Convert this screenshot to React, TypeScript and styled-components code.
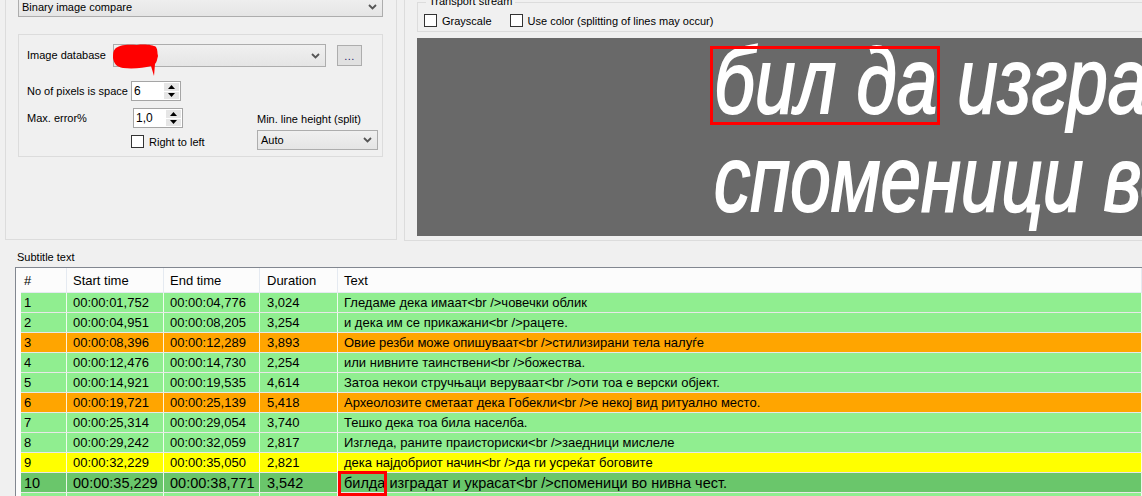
import React from "react";
import styled, { createGlobalStyle } from "styled-components";

const GlobalStyle = createGlobalStyle`
  html, body {
    margin: 0;
    padding: 0;
    background: #f0f0f0;
    overflow: hidden;
  }
  body {
    font-family: "Liberation Sans", Arial, sans-serif;
    font-size: 11px;
    color: #000;
  }
`;

const Page = styled.div`
  width: 1142px;
  height: 496px;
  overflow: hidden;
  display: flex;
  flex-direction: column;
`;

const TopArea = styled.div`
  display: flex;
  align-items: flex-start;
  margin-top: -10px;
  height: 251px;
  flex-shrink: 0;
`;

const LeftPanel = styled.div`
  box-sizing: border-box;
  margin-left: 5px;
  width: 392px;
  height: 250px;
  border: 1px solid #dcdcdc;
  padding: 0 12px;
  flex-shrink: 0;
`;

const RightPanel = styled.div`
  box-sizing: border-box;
  margin-left: 7px;
  margin-right: -20px;
  flex: 1;
  height: 251px;
  border: 1px solid #dcdcdc;
  padding-left: 12px;
  display: flex;
  flex-direction: column;
`;

const Combo = styled.div<{ $width: number; $height?: number; $top?: number }>`
  box-sizing: border-box;
  position: relative;
  width: ${(p) => p.$width}px;
  height: ${(p) => p.$height ?? 21}px;
  margin-top: ${(p) => p.$top ?? 0}px;
  border: 1px solid #adadad;
  background: linear-gradient(#f0f0f0, #e5e5e5);
  display: flex;
  align-items: center;
  padding-left: 3px;
  flex-shrink: 0;
`;

const ComboArrow = styled.svg`
  position: absolute;
  right: 5px;
  top: 50%;
  margin-top: -3px;
`;

const Chevron = () => (
  <ComboArrow width="9" height="6" viewBox="0 0 9 6">
    <path d="M1 1 L4.5 4.5 L8 1" fill="none" stroke="#555" strokeWidth="1.8" />
  </ComboArrow>
);

const GroupBox = styled.div`
  box-sizing: border-box;
  margin-top: 17px;
  width: 365px;
  height: 123px;
  border: 1px solid #dcdcdc;
  padding: 9px 0 0 8px;
`;

const Row = styled.div<{ $top?: number }>`
  display: flex;
  align-items: center;
  margin-top: ${(p) => p.$top ?? 0}px;
`;

const Label = styled.span<{ $width?: number }>`
  display: inline-block;
  width: ${(p) => (p.$width ? `${p.$width}px` : "auto")};
  white-space: nowrap;
  line-height: 13px;
`;

const SmallButton = styled.div`
  box-sizing: border-box;
  width: 25px;
  height: 21px;
  margin-left: 11px;
  border: 1px solid #adadad;
  background: #e1e1e1;
  display: flex;
  align-items: center;
  justify-content: center;
  color: #1c1c6a;
  font-size: 11px;
  letter-spacing: 0.5px;
`;

const Scribble = styled.svg`
  position: absolute;
  left: -1px;
  top: -1px;
`;

const SpinBox = styled.div`
  box-sizing: border-box;
  width: 50px;
  height: 20px;
  border: 1px solid #a5a5a5;
  background: #fff;
  display: flex;
  align-items: stretch;
`;

const SpinValue = styled.span`
  flex: 1;
  padding-left: 2px;
  line-height: 18px;
  font-size: 12px;
`;

const SpinButtons = styled.div`
  width: 15px;
  display: flex;
  flex-direction: column;
  padding: 1px 1px 1px 0;
  gap: 1px;
`;

const SpinButton = styled.div`
  flex: 1;
  background: #e6e6e6;
  display: flex;
  align-items: center;
  justify-content: center;
`;

const Spin = ({ value }: { value: string }) => (
  <SpinBox>
    <SpinValue>{value}</SpinValue>
    <SpinButtons>
      <SpinButton>
        <svg width="7" height="4" viewBox="0 0 7 4">
          <path d="M0 4 L3.5 0 L7 4 Z" fill="#000" />
        </svg>
      </SpinButton>
      <SpinButton>
        <svg width="7" height="4" viewBox="0 0 7 4">
          <path d="M0 0 L3.5 4 L7 0 Z" fill="#000" />
        </svg>
      </SpinButton>
    </SpinButtons>
  </SpinBox>
);

const Lower = styled.div`
  display: flex;
  margin-top: 14px;
`;

const LeftCol = styled.div`
  width: 230px;
  display: flex;
  flex-direction: column;
`;

const RightCol = styled.div`
  padding-top: 32px;
  display: flex;
  flex-direction: column;
  gap: 4px;
`;

const CheckItem = styled.label<{ $left?: number }>`
  display: flex;
  align-items: center;
  gap: 5px;
  margin-left: ${(p) => p.$left ?? 0}px;
  white-space: nowrap;
`;

const CheckBox = styled.span`
  box-sizing: border-box;
  width: 13px;
  height: 13px;
  border: 1px solid #333;
  background: #fff;
  flex-shrink: 0;
`;

const TransportGroup = styled.div`
  position: relative;
  box-sizing: border-box;
  margin-top: 11px;
  height: 30px;
  border: 1px solid #dcdcdc;
  margin-right: -2px;
  padding: 7px 0 0 6px;
  display: flex;
  gap: 18px;
`;

const Legend = styled.span`
  position: absolute;
  top: -8px;
  left: 8px;
  padding: 0 3px;
  background: #f0f0f0;
  line-height: 13px;
`;

const Preview = styled.div`
  position: relative;
  margin-top: 6px;
  height: 198px;
  background: #696969;
  overflow: hidden;
  padding-left: 297px;
`;

const PreviewLine = styled.div`
  color: #fff;
  font-family: "Liberation Sans", Arial, sans-serif;
  font-style: italic;
  font-size: 92px;
  line-height: 98px;
  white-space: nowrap;
  -webkit-text-stroke: 2px #fff;
  transform: scaleX(0.79);
  transform-origin: left center;
  &:first-child {
    margin-top: -6px;
  }
`;

const Highlight = styled.div<{ $l: number; $t: number; $w: number; $h: number }>`
  position: absolute;
  box-sizing: border-box;
  left: ${(p) => p.$l}px;
  top: ${(p) => p.$t}px;
  width: ${(p) => p.$w}px;
  height: ${(p) => p.$h}px;
  border: 3px solid #ff0000;
  pointer-events: none;
`;

const SectionLabel = styled.div`
  margin-top: 10px;
  padding-left: 17px;
  line-height: 13px;
`;

const Table = styled.div`
  margin: 3px 0 0 15px;
  flex: 1;
  border-top: 1px solid #828790;
  border-left: 1px solid #828790;
  background: #fcfcfc;
  overflow: hidden;
`;

const HeaderRow = styled.div`
  display: flex;
  height: 24px;
  margin-left: 5px;
  border-bottom: 1px solid #e5eaf1;
`;

const widths = [46, 97, 96, 78];
const pads = [3, 6, 6, 7, 6];

const HeaderCell = styled.div<{ $col: number }>`
  box-sizing: border-box;
  ${(p) => (p.$col < 4 ? `width: ${widths[p.$col]}px;` : "flex: 1;")}
  padding-left: ${(p) => pads[p.$col]}px;
  border-right: 1px solid #e5eaf1;
  display: flex;
  align-items: center;
  font-size: 13px;
  color: #000;
`;

const rowColors = {
  green: "#90ee90",
  orange: "#ffa500",
  yellow: "#ffff00",
  selected: "#6ac66b",
};

type Tone = keyof typeof rowColors;

const DataRow = styled.div<{ $tone: Tone }>`
  display: flex;
  height: 20px;
  margin-left: 5px;
  box-sizing: border-box;
  border-bottom: 1px solid #e8e8e8;
  background: ${(p) => rowColors[p.$tone]};
  font-size: ${(p) => (p.$tone === "selected" ? 14.5 : 13)}px;
`;

const Cell = styled.div<{ $col: number }>`
  box-sizing: border-box;
  position: relative;
  ${(p) => (p.$col < 4 ? `width: ${widths[p.$col]}px;` : "flex: 1;")}
  padding-left: ${(p) => pads[p.$col]}px;
  border-right: 1px solid rgba(255, 255, 255, 0.85);
  display: flex;
  align-items: center;
  white-space: nowrap;
`;

type Sub = { n: string; start: string; end: string; dur: string; text: string; tone: Tone };

const subs: Sub[] = [
  { n: "1", start: "00:00:01,752", end: "00:00:04,776", dur: "3,024", text: "Гледаме дека имаат<br />човечки облик", tone: "green" },
  { n: "2", start: "00:00:04,951", end: "00:00:08,205", dur: "3,254", text: "и дека им се прикажани<br />рацете.", tone: "green" },
  { n: "3", start: "00:00:08,396", end: "00:00:12,289", dur: "3,893", text: "Овие резби може опишуваат<br />стилизирани тела налуѓе", tone: "orange" },
  { n: "4", start: "00:00:12,476", end: "00:00:14,730", dur: "2,254", text: "или нивните таинствени<br />божества.", tone: "green" },
  { n: "5", start: "00:00:14,921", end: "00:00:19,535", dur: "4,614", text: "Затоа некои стручњаци веруваат<br />оти тоа е верски објект.", tone: "green" },
  { n: "6", start: "00:00:19,721", end: "00:00:25,139", dur: "5,418", text: "Археолозите сметаат дека Гобекли<br />е некој вид ритуално место.", tone: "orange" },
  { n: "7", start: "00:00:25,314", end: "00:00:29,054", dur: "3,740", text: "Тешко дека тоа била населба.", tone: "green" },
  { n: "8", start: "00:00:29,242", end: "00:00:32,059", dur: "2,817", text: "Изгледа, раните праисториски<br />заедници мислеле", tone: "green" },
  { n: "9", start: "00:00:32,229", end: "00:00:35,050", dur: "2,821", text: "дека најдобриот начин<br />да ги усреќат боговите", tone: "yellow" },
  { n: "10", start: "00:00:35,229", end: "00:00:38,771", dur: "3,542", text: "билда изградат и украсат<br />споменици во нивна чест.", tone: "selected" },
  { n: "", start: "", end: "", dur: "", text: "", tone: "green" },
];

export default function App() {
  return (
    <Page>
      <GlobalStyle />
      <TopArea>
        <LeftPanel>
          <Combo $width={365} $top={5}>
            Binary image compare
            <Chevron />
          </Combo>
          <GroupBox>
            <Row>
              <Label $width={86}>Image database</Label>
              <Combo $width={213} $height={23}>
                <Chevron />
                <Scribble width="46" height="33" viewBox="0 0 46 33">
                  <path
                    d="M2 5 C5 1 14 0 24 1 C32 0 40 1 43 3 C45 6 44 9 45 12 C44 15 44 18 42 20 L41 32 L38 22 C31 24 20 25 10 24 C4 23 1 20 0 14 C0 10 0 7 2 5 Z"
                    fill="#ff0000"
                  />
                </Scribble>
              </Combo>
              <SmallButton>...</SmallButton>
            </Row>
            <Lower>
              <LeftCol>
                <Row>
                  <Label $width={104}>No of pixels is space</Label>
                  <Spin value="6" />
                </Row>
                <Row $top={7}>
                  <Label $width={106}>Max. error%</Label>
                  <Spin value="1,0" />
                </Row>
                <Row $top={7}>
                  <CheckItem $left={104}>
                    <CheckBox />
                    Right to left
                  </CheckItem>
                </Row>
              </LeftCol>
              <RightCol>
                <Label>Min. line height (split)</Label>
                <Combo $width={121} $height={20}>
                  Auto
                  <Chevron />
                </Combo>
              </RightCol>
            </Lower>
          </GroupBox>
        </LeftPanel>
        <RightPanel>
          <TransportGroup>
            <Legend>Transport stream</Legend>
            <CheckItem>
              <CheckBox />
              Grayscale
            </CheckItem>
            <CheckItem>
              <CheckBox />
              Use color (splitting of lines may occur)
            </CheckItem>
          </TransportGroup>
          <Preview>
            <PreviewLine>бил да изградат и украсат</PreviewLine>
            <PreviewLine>споменици во нивна чест.</PreviewLine>
            <Highlight $l={293} $t={8} $w={230} $h={79} />
          </Preview>
        </RightPanel>
      </TopArea>
      <SectionLabel>Subtitle text</SectionLabel>
      <Table>
        <HeaderRow>
          {["#", "Start time", "End time", "Duration", "Text"].map((h, i) => (
            <HeaderCell key={h} $col={i}>
              {h}
            </HeaderCell>
          ))}
        </HeaderRow>
        {subs.map((s, idx) => (
          <DataRow key={idx} $tone={s.tone}>
            <Cell $col={0}>{s.n}</Cell>
            <Cell $col={1}>{s.start}</Cell>
            <Cell $col={2}>{s.end}</Cell>
            <Cell $col={3}>{s.dur}</Cell>
            <Cell $col={4}>
              {s.text}
              {s.n === "10" && <Highlight $l={0} $t={-2} $w={49} $h={25} />}
            </Cell>
          </DataRow>
        ))}
      </Table>
    </Page>
  );
}
